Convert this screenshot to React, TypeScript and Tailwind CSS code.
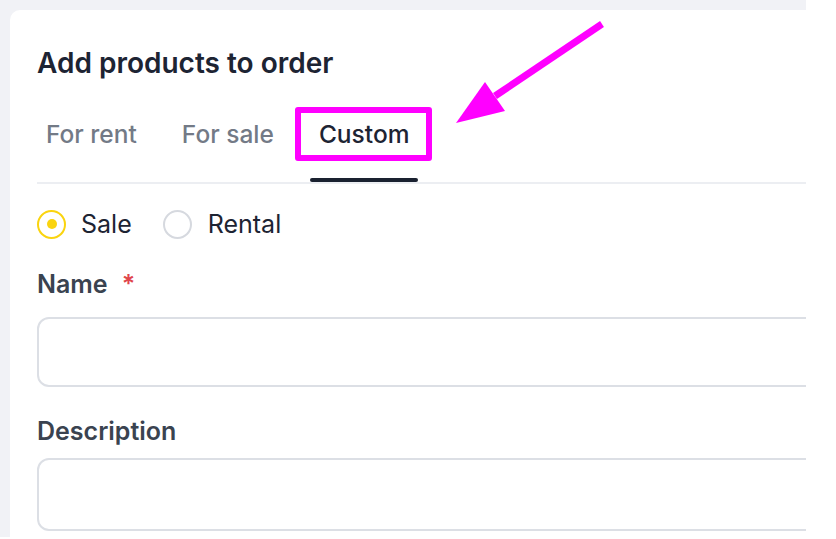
import React from 'react';

const tabs = ['For rent', 'For sale', 'Custom'];

export default function App() {
  const active = 'Custom';

  return (
    <div className="flex h-[539px] w-[836px] bg-white" style={{ fontFamily: 'Inter, "Noto Sans", sans-serif' }}>
      <div className="relative h-[537px] w-[806px] overflow-hidden bg-[#f1f2f6] pl-[10px] pt-[10px]">
        <div className="h-[600px] w-[900px] rounded-[10px] bg-white px-[27px] pt-[35px]">
          <h1 className="text-[28px] font-semibold leading-[36px] text-[#1d2433]">Add products to order</h1>

          <div className="mt-[37px] flex gap-[27px]">
            {tabs.map((tab) => (
              <div key={tab} className="flex flex-col">
                <span
                  className={
                    tab === active
                      ? 'px-[9px] text-[24.5px] font-medium leading-[32px] text-[#1d2433]'
                      : 'px-[9px] text-[24.5px] font-medium leading-[32px] text-[#737a86]'
                  }
                >
                  {tab}
                </span>
                <div className={tab === active ? 'mt-[28px] h-[4px] rounded-full bg-[#1a2130]' : 'mt-[28px] h-[4px]'} />
              </div>
            ))}
          </div>
          <div className="h-[2px] w-full bg-[#eceef2]" />

          <div className="mt-[24px] flex h-8 items-center">
            <span className="flex h-[29px] w-[29px] items-center justify-center rounded-full border-2 border-[#fad40f]">
              <span className="h-[10px] w-[10px] rounded-full bg-[#fad40f]" />
            </span>
            <span className="ml-[15px] text-[25px] leading-[32px] text-[#1d2433]">Sale</span>
            <span className="ml-[31px] h-[29px] w-[29px] rounded-full border-2 border-[#d6d9df]" />
            <span className="ml-[16px] text-[25px] leading-[32px] text-[#1d2433]">Rental</span>
          </div>

          <div className="mt-[28px] flex items-center text-[25px] font-semibold leading-[32px] text-[#3a4350]">
            Name <span className="ml-[14px] text-[#e0464c]">*</span>
          </div>
          <div className="mt-[17px] h-[70px] w-full rounded-[12px] border-2 border-[#dcdfe5] bg-white" />

          <div className="mt-[28px] text-[25px] font-semibold leading-[32px] text-[#3a4350]">Description</div>
          <div className="mt-[11px] h-[73px] w-full rounded-[12px] border-2 border-[#dcdfe5] bg-white" />
        </div>

        <div className="absolute left-[295px] top-[107px] h-[54px] w-[137px] rounded-[3px] border-[6px] border-[#ff00ff]" />
        <svg className="absolute left-0 top-0" width="806" height="537">
          <line x1="602" y1="24" x2="495" y2="96" stroke="#ff00ff" strokeWidth="7" />
          <polygon points="456,123 485,82 505,111" fill="#ff00ff" />
        </svg>
      </div>
    </div>
  );
}
